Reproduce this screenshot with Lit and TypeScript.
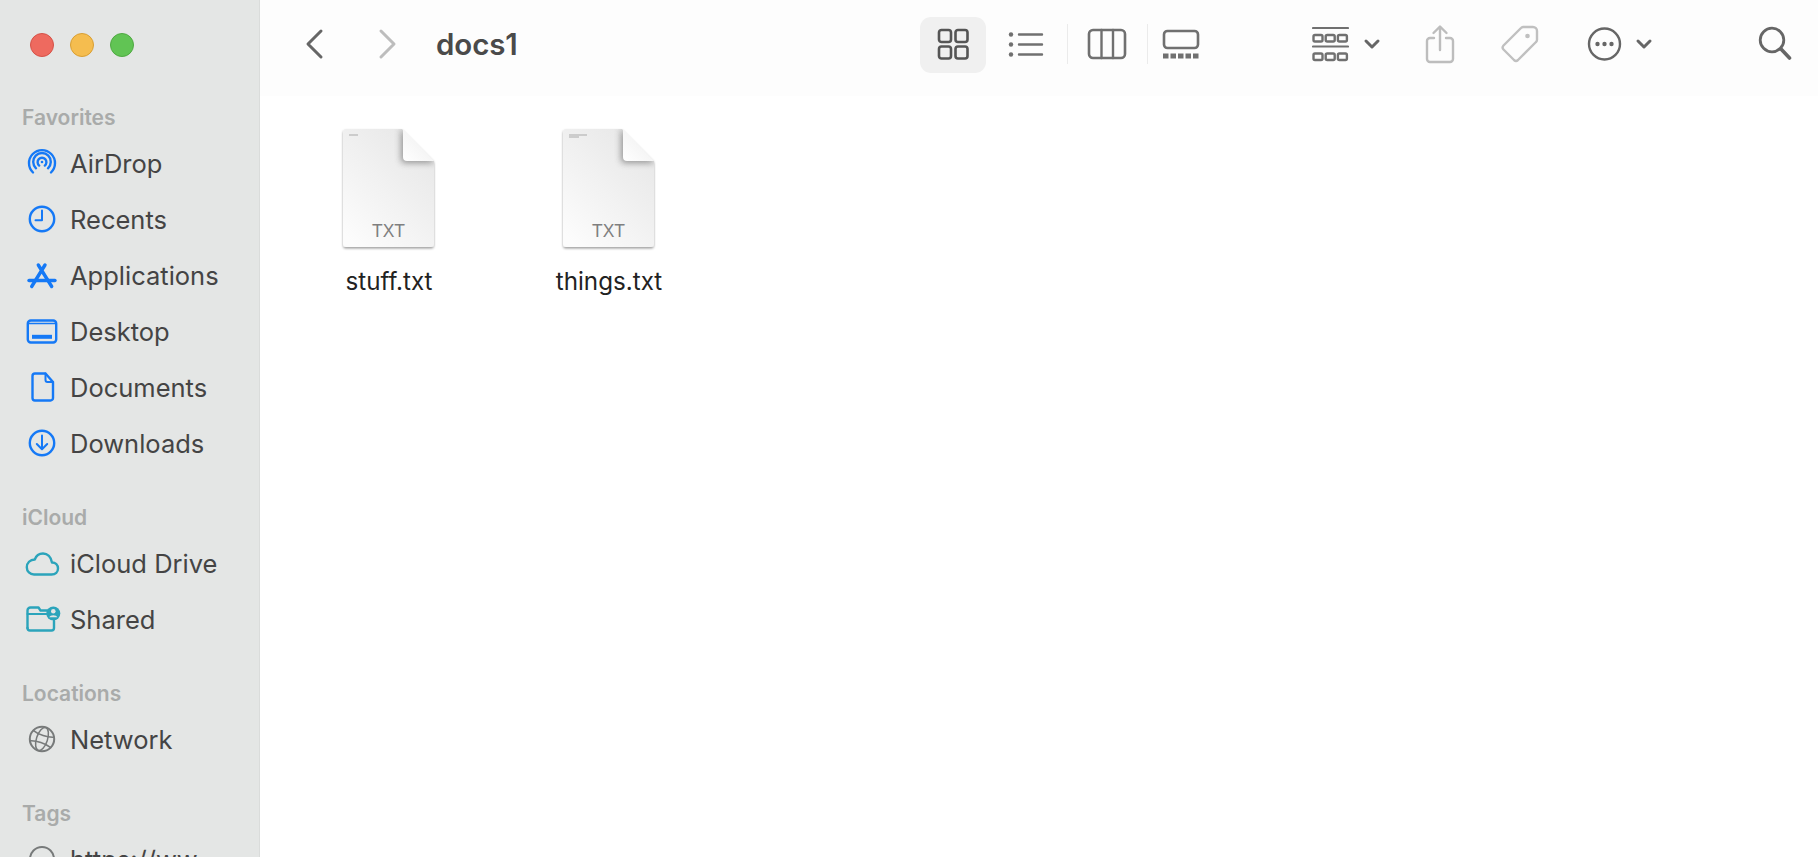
import { LitElement, html, css, svg } from "lit";
import { customElement } from "lit/decorators.js";

const B = "#1579f6";
const T = "#2ba4bb";
const G = "#777a7a";
const SB = "#e4e6e5";

const side = (inner: unknown, color: string) => html`<svg class="sicon" viewBox="0 0 40 40" fill="none" stroke=${color} stroke-width="2.4" stroke-linecap="round" stroke-linejoin="round">${inner}</svg>`;

const icons: Record<string, unknown> = {
  airdrop: side(svg`
    <path d="M11 29.5A13 13 0 1 1 29 29.5"/>
    <path d="M14 25.3A8.8 8.8 0 1 1 26 25.3"/>
    <path d="M17.2 22.6A4.4 4.4 0 1 1 22.8 22.6"/>
    <circle cx="20" cy="19" r="1.3" fill="${B}" stroke="none"/>`, B),
  recents: side(svg`<circle cx="20" cy="20" r="12.2"/><path d="M20 11.5V21.3H13.5" stroke-width="2"/>`, B),
  apps: side(svg`
    <path d="M16.300 10L29.700 31.500M23 10L9.700 31.500" stroke-width="3.400"/>
    <path d="M7 25.500H33" stroke-width="3.400"/>`, B),
  desktop: side(svg`
    <rect x="5.8" y="9.5" width="28.4" height="22" rx="3"/>
    <path d="M6 12.5H34" stroke-width="1.6"/>
    <path d="M10 25.8H30" stroke-width="4" stroke-linecap="butt"/>`, B),
  docs: side(svg`
    <path d="M13 6.5H23.5L31 15V31A2.5 2.5 0 0 1 28.500 33.500H13A2.500 2.500 0 0 1 10.500 31V9A2.500 2.500 0 0 1 13 6.500Z"/>
    <path d="M23.500 6.500V13A2 2 0 0 0 25.500 15H31" stroke-width="2"/>`, B),
  downloads: side(svg`<circle cx="20" cy="20" r="12.2"/><path d="M20 12.500V26M14.800 21L20 26.300L25.200 21" stroke-width="2"/>`, B),
  cloud: side(svg`<path d="M12 31.500H29.500C33.500 31.500 36 29 36 25.500C36 22 33.500 19.500 30 19.500C29 14 25.500 10.500 21 10.500C17 10.500 14 13 12.800 16.500C8 16.500 4.800 20 4.800 24.200C4.800 28.500 8 31.500 12 31.500Z"/>`, T),
  shared: side(svg`
    <path d="M5.500 29V11.500A3 3 0 0 1 8.500 8.500H16.500L18.500 11.500H26"/>
    <path d="M5.500 15H25" stroke-width="2"/>
    <path d="M32 22V29A2.500 2.500 0 0 1 29.500 31.500H8A2.500 2.500 0 0 1 5.500 29"/>
    <circle cx="31.300" cy="14.500" r="7" fill="${T}" stroke="none"/>
    <circle cx="31.300" cy="12.300" r="2.300" fill="${SB}" stroke="none"/>
    <path d="M27.300 18.300C28 15.500 34.600 15.500 35.300 18.300Z" fill="${SB}" stroke="none"/>`, T),
  network: side(svg`
    <circle cx="20" cy="20" r="12.200" stroke-width="2"/>
    <g transform="rotate(18 20 20)" stroke-width="1.500">
      <ellipse cx="20" cy="20" rx="5.500" ry="12"/>
      <path d="M9 14.500C15 17 25 17 31 14.500M9 25.500C15 23 25 23 31 25.500"/>
    </g>`, G),
  tag: side(svg`<circle cx="20" cy="20" r="12" stroke-width="2"/>`, G),
};

const tool = (w: number, h: number, inner: unknown, cls = "") => html`<svg class="t ${cls}" width=${w} height=${h} viewBox="0 0 ${w} ${h}" fill="none" stroke-linecap="round" stroke-linejoin="round">${inner}</svg>`;

const chevDown = (cls: string) => tool(18, 12, svg`<path d="M3 3L9 9L15 3" stroke="#666" stroke-width="3"/>`, cls);

const fileIcon = (lines: number[]) => html`
  <svg class="doc" width="100" height="128" viewBox="0 0 100 128">
    <defs>
      <linearGradient id="pg" x1="0.900" y1="0" x2="0.150" y2="1">
        <stop offset="0" stop-color="#e6e6e6"/><stop offset="0.600" stop-color="#f3f3f3"/><stop offset="1" stop-color="#fcfcfc"/>
      </linearGradient>
      <linearGradient id="fg" x1="0" y1="1" x2="1" y2="0">
        <stop offset="0" stop-color="#ffffff"/><stop offset="1" stop-color="#ececec"/>
      </linearGradient>
      <filter id="ds" x="-10%" y="-10%" width="120%" height="120%"><feDropShadow dx="0" dy="1.500" stdDeviation="1.300" flood-color="#000" flood-opacity=".38"/></filter>
      <filter id="bl" x="-30%" y="-30%" width="160%" height="160%"><feGaussianBlur stdDeviation="3"/></filter>
      <clipPath id="pc"><path d="M7 3H63L95 35V118A3 3 0 0 1 92 121H7A3 3 0 0 1 4 118V6A3 3 0 0 1 7 3Z"/></clipPath>
    </defs>
    <path d="M7 3H63L95 35V118A3 3 0 0 1 92 121H7A3 3 0 0 1 4 118V6A3 3 0 0 1 7 3Z" fill="url(#pg)" filter="url(#ds)"/>
    <g clip-path="url(#pc)"><path d="M63 3L95 35V37H66A4 4 0 0 1 62 33V3Z" fill="#808080" opacity=".8" filter="url(#bl)"/></g>
    <path d="M64 3L95 34.500C95 35 94 35 93 35H68A4 4 0 0 1 64 31Z" fill="url(#fg)"/>
    ${lines.map((w, i) => svg`<rect x="10" y=${8.500 + i * 2} width=${w} height="1" fill="#a9a9a9"/>`)}
    <text x="49.500" y="111" text-anchor="middle" class="ext">TXT</text>
  </svg>`;

@customElement("app-root")
export class AppRoot extends LitElement {
  static styles = css`
    :host { display: block; width: 1818px; height: 857px; overflow: hidden; background: #fff; font-family: Inter, "Liberation Sans", sans-serif; }
    .win { display: flex; height: 857px; overflow: hidden; }
    .sidebar { width: 259px; flex: none; height: 857px; overflow: hidden; background: #e4e6e5; border-right: 1px solid #dadcdb; }
    .lights { display: flex; gap: 16px; height: 98px; box-sizing: border-box; padding: 33px 0 0 30px; }
    .light { width: 22px; height: 22px; border-radius: 50%; border: 1px solid; }
    .r { background: #ee6a5f; border-color: #d55248; }
    .y { background: #f5bd4f; border-color: #d99f33; }
    .g { background: #61c454; border-color: #4fa942; }
    .section { margin-bottom: 27px; }
    .label { height: 37px; line-height: 39px; padding-left: 22px; font-size: 21px; font-weight: 600; color: #a9abaa; }
    .row { display: flex; align-items: center; height: 56px; padding-left: 22px; font-size: 25.500px; color: #444; white-space: nowrap; }
    .sicon { width: 40px; height: 40px; margin-right: 8px; flex: none; }
    .main { flex: 1; min-width: 0; display: flex; flex-direction: column; }
    .bar { display: flex; align-items: center; height: 96px; flex: none; box-sizing: border-box; padding-bottom: 8px; background: #fdfdfd; }
    .t { flex: none; display: block; }
    .m13 { margin-left: 13px; } .m14 { margin-left: 14px; } .m19 { margin-left: 19px; } .m22 { margin-left: 22px; }
    .m44 { margin-left: 44px; } .m45 { margin-left: 45px; } .m47 { margin-left: 47px; } .m54 { margin-left: 54px; } .m105 { margin-left: 105px; } .m112 { margin-left: 112px; }
    .title { flex: none; font-size: 29.500px; font-weight: 600; color: #4a4a4a; margin-left: 38px; width: 484px; letter-spacing: -.1px; }
    .sel { flex: none; box-sizing: border-box; width: 66px; height: 56px; margin-top: 2px; padding-bottom: 2px; border-radius: 11px; background: #f0f0f0; display: flex; align-items: center; justify-content: center; }
    .sep { flex: none; width: 1px; height: 40px; background: #ebebeb; }
    .s23 { margin-left: 23px; } .s20 { margin-left: 20px; }
    .files { display: flex; padding: 30px 0 0 19px; }
    .file { width: 220px; display: flex; flex-direction: column; align-items: center; }
    .doc { display: block; }
    .ext { font: 400 17.500px "Liberation Sans", Arial, sans-serif; fill: #7f7f7f; }
    .name { font-size: 24.200px; color: #222; margin-top: 12px; line-height: 32px; }
  `;

  private sec(label: string, rows: [string, string][]) {
    return html`<div class="section">
      <div class="label">${label}</div>
      ${rows.map(([ic, t]) => html`<div class="row">${icons[ic]}<span>${t}</span></div>`)}
    </div>`;
  }

  render() {
    return html`<div class="win">
      <aside class="sidebar">
        <div class="lights"><div class="light r"></div><div class="light y"></div><div class="light g"></div></div>
        ${this.sec("Favorites", [["airdrop", "AirDrop"], ["recents", "Recents"], ["apps", "Applications"], ["desktop", "Desktop"], ["docs", "Documents"], ["downloads", "Downloads"]])}
        ${this.sec("iCloud", [["cloud", "iCloud Drive"], ["shared", "Shared"]])}
        ${this.sec("Locations", [["network", "Network"]])}
        ${this.sec("Tags", [["tag", "https://ww"]])}
      </aside>
      <main class="main">
        <div class="bar">
          ${tool(20, 32, svg`<path d="M17 3L4 16L17 29" stroke="#666" stroke-width="3"/>`, "m44")}
          ${tool(20, 32, svg`<path d="M3 3L16 16L3 29" stroke="#bdbdbd" stroke-width="3"/>`, "m54")}
          <div class="title">docs1</div>
          <div class="sel">
            ${tool(32, 32, svg`<g stroke="#555" stroke-width="2.600"><rect x="2" y="2" width="12" height="12" rx="2.500"/><rect x="18.500" y="2" width="12" height="12" rx="2.500"/><rect x="2" y="18.500" width="12" height="12" rx="2.500"/><rect x="18.500" y="18.500" width="12" height="12" rx="2.500"/></g>`)}
          </div>
          ${tool(36, 26, svg`<g fill="#707070"><circle cx="3" cy="3.500" r="2.200"/><circle cx="3" cy="13.500" r="2.200"/><circle cx="3" cy="23.500" r="2.200"/></g><path d="M11 3.500H34M11 13.500H34M11 23.500H34" stroke="#707070" stroke-width="2.400"/>`, "m22")}
          <div class="sep s23"></div>
          ${tool(40, 32, svg`<rect x="2" y="2" width="36" height="28" rx="4" stroke="#707070" stroke-width="2.600"/><path d="M14.500 2V30M26 2V30" stroke="#707070" stroke-width="2.400"/>`, "m19")}
          <div class="sep s20"></div>
          ${tool(38, 30, svg`<rect x="2" y="2" width="34" height="17" rx="3.500" stroke="#707070" stroke-width="2.600"/><g fill="#707070">${[0, 1, 2, 3, 4].map((i) => svg`<rect x=${1 + i * 7.500} y="24.500" width="5.500" height="5"/>`)}</g>`, "m14")}
          ${tool(37, 36, svg`<path d="M1 2H36M1 20.500H36" stroke="#707070" stroke-width="2.200"/><g stroke="#707070" stroke-width="2.400">${[0, 1].map((r) => [0, 1, 2].map((c) => svg`<rect x=${1.500 + c * 12.200} y=${9 + r * 18.500} width="9" height="6.500" rx="1.500"/>`))}</g>`, "m112")}
          ${chevDown("m14")}
          ${tool(30, 40, svg`<g stroke="#bdbdbd" stroke-width="2.400"><path d="M9 14H5A3 3 0 0 0 2 17V35A3 3 0 0 0 5 38H25A3 3 0 0 0 28 35V17A3 3 0 0 0 25 14H21"/><path d="M15 26V3M8.500 9L15 2.500L21.500 9"/></g>`, "m44")}
          ${tool(40, 40, svg`<g stroke="#c0c0c0" stroke-width="2.400"><path d="M23 3H33A4 4 0 0 1 37 7V15.500A3 3 0 0 1 36 18L18 36A3 3 0 0 1 14 36L3.500 25.500A3 3 0 0 1 3.500 21.500L21 4A3 3 0 0 1 23 3Z"/></g><circle cx="27.500" cy="12" r="2.300" fill="#c0c0c0"/>`, "m45")}
          ${tool(35, 36, svg`<circle cx="17.500" cy="18" r="15.500" stroke="#666" stroke-width="2.400"/><g fill="#666"><circle cx="10.500" cy="18" r="2.200"/><circle cx="17.500" cy="18" r="2.200"/><circle cx="24.500" cy="18" r="2.200"/></g>`, "m47")}
          ${chevDown("m13")}
          ${tool(34, 36, svg`<circle cx="14" cy="14" r="11.800" stroke="#666" stroke-width="2.800"/><path d="M23 23L31.500 32" stroke="#666" stroke-width="3.600"/>`, "m105")}
        </div>
        <div class="files">
          <div class="file">${fileIcon([9])}<div class="name">stuff.txt</div></div>
          <div class="file">${fileIcon([18, 10])}<div class="name">things.txt</div></div>
        </div>
      </main>
    </div>`;
  }
}
